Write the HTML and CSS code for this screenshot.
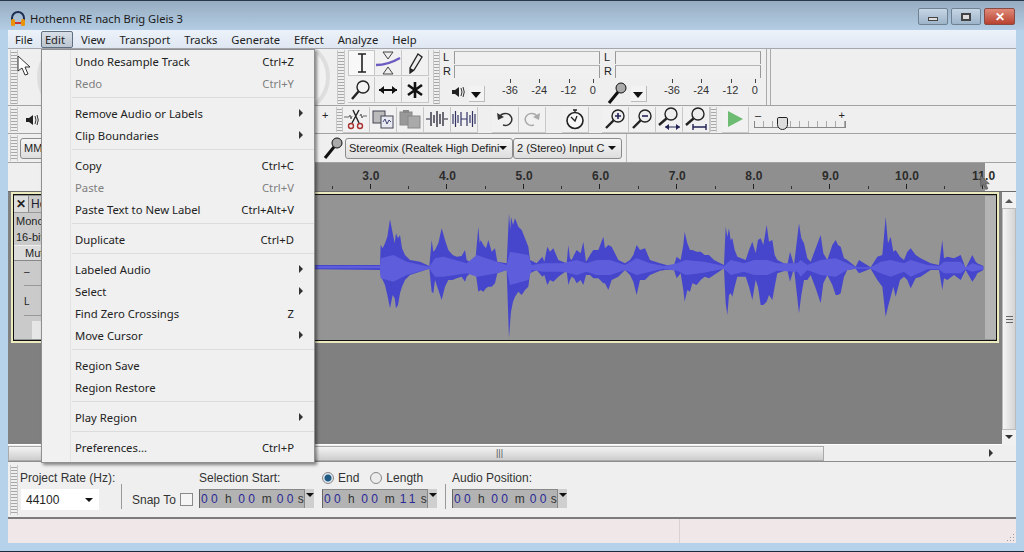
FILE: index.html
```html
<!DOCTYPE html>
<html lang="en">
<head>
  <meta charset="UTF-8">
  <title>Hothenn RE nach Brig Gleis 3</title>
  <link rel="stylesheet" href="styles.css">
</head>
<body>
<div class="window">
  <div class="titlebar">
    <svg class="app-icon" width="16" height="16" viewBox="0 0 16 16"><path d="M2 10V7a6 6 0 0 1 12 0v3" fill="none" stroke="#1d2c50" stroke-width="2"/><rect x="1" y="8" width="4" height="7" rx="1.5" fill="#e8930c"/><rect x="11" y="8" width="4" height="7" rx="1.5" fill="#e8930c"/><rect x="5" y="11" width="6" height="2" fill="#c33"/></svg>
    <span class="title-text">Hothenn RE nach Brig Gleis 3</span>
    <div class="win-buttons">
      <div class="win-btn"><span class="min-mark"></span></div>
      <div class="win-btn"><span class="max-mark"></span></div>
      <div class="win-btn close-btn">✕</div>
    </div>
  </div>

  <div class="menubar">
    <span class="menu-label">File</span>
    <span class="menu-label active">Edit</span>
    <span class="menu-label">View</span>
    <span class="menu-label">Transport</span>
    <span class="menu-label">Tracks</span>
    <span class="menu-label">Generate</span>
    <span class="menu-label">Effect</span>
    <span class="menu-label">Analyze</span>
    <span class="menu-label">Help</span>
  </div>

  <div class="toolrow row-one">
    <div class="grip"></div>
    <div class="mixer"><div class="dial"></div><div class="dial"></div></div>
    <div class="grip"></div>
    <div class="tool-grid">
      <div class="tool-btn pressed"><svg width="20" height="22" viewBox="0 0 20 22"><path d="M6 2h8M10 2v18M6 20h8" fill="none" stroke="#222" stroke-width="1.6"/></svg></div>
      <div class="tool-btn"><svg width="26" height="24" viewBox="0 0 26 24"><path d="M8 1h10l-5 7zM8 23h10l-5-7z" fill="#eee" stroke="#444"/><path d="M1 14q12 0 24-7" fill="none" stroke="#6a5cc0" stroke-width="2.4"/></svg></div>
      <div class="tool-btn"><svg width="20" height="22" viewBox="0 0 20 22"><path d="M13 2l4 3-8 13-4 3 0-5z" fill="#eee" stroke="#222" stroke-width="1.3"/><path d="M5 16l4 2-4 3z" fill="#222"/></svg></div>
      <div class="tool-btn"><svg width="22" height="22" viewBox="0 0 22 22"><circle cx="13" cy="8" r="6" fill="#f4f4f4" stroke="#222" stroke-width="1.4"/><path d="M8.500 12.500L2 20" stroke="#222" stroke-width="2.4"/></svg></div>
      <div class="tool-btn"><svg width="20" height="12" viewBox="0 0 20 12"><path d="M1 6h18" stroke="#111" stroke-width="2"/><path d="M1 6l5-4v8zM19 6l-5-4v8z" fill="#111"/></svg></div>
      <div class="tool-btn"><svg width="18" height="18" viewBox="0 0 18 18"><path d="M9 1v16M2 4l14 10M16 4L2 14" stroke="#111" stroke-width="2.6"/></svg></div>
    </div>
    <div class="grip grip-thin"></div>
    <div class="meters">
      <div class="meter-bars">
        <div class="meter-pair">
          <div class="meter-line"><span class="meter-letter">L</span><span class="meter-bar"></span></div>
          <div class="meter-line"><span class="meter-letter">R</span><span class="meter-bar"></span></div>
        </div>
        <div class="meter-pair">
          <div class="meter-line"><span class="meter-letter">L</span><span class="meter-bar"></span></div>
          <div class="meter-line"><span class="meter-letter">R</span><span class="meter-bar"></span></div>
        </div>
      </div>
      <div class="meter-scales">
        <svg class="meter-icon" width="14" height="14" viewBox="0 0 14 14"><path d="M1 5h3l4-3v10L4 9H1z" fill="#222"/><path d="M10 3q2 4 0 8M12 2q2.500 5 0 10" fill="none" stroke="#333"/></svg>
        <span class="meter-drop"></span>
        <div class="scale-nums"><span>-36</span><span>-24</span><span>-12</span><span>0</span></div>
        <svg class="mic-icon" width="20" height="22" viewBox="0 0 20 22"><circle cx="14" cy="6" r="5" fill="#aaa" stroke="#111"/><path d="M11 10L2 21" stroke="#111" stroke-width="3"/></svg>
        <span class="meter-drop"></span>
        <div class="scale-nums"><span>-36</span><span>-24</span><span>-12</span><span>0</span></div>
      </div>
    </div>
    <div class="double-rule"></div>
  </div>

  <div class="toolrow row-two">
    <div class="grip"></div>
    <svg class="row-speaker" width="14" height="14" viewBox="0 0 14 14"><path d="M1 5h3l4-3v10L4 9H1z" fill="#222"/><path d="M10 3q2 4 0 8M12 2q2.500 5 0 10" fill="none" stroke="#333"/></svg>
    <span class="plus-mark">+</span>
    <div class="grip grip-thin"></div>
    <div class="btn-group">
      <div class="tool-btn"><svg width="24" height="22" viewBox="0 0 24 22"><path d="M0 9h5l1-2 1 4 1-3M16 8l1-2 1 4 1-2h4" fill="none" stroke="#666"/><path d="M15 2L8 15M9 2l6 13" stroke="#222" stroke-width="1.4"/><circle cx="7" cy="18" r="2.500" fill="none" stroke="#a33" stroke-width="1.4"/><circle cx="16" cy="18" r="2.500" fill="none" stroke="#a33" stroke-width="1.4"/></svg></div>
      <div class="tool-btn"><svg width="22" height="20" viewBox="0 0 22 20"><rect x="1" y="2" width="12" height="12" fill="#bbb" stroke="#445"/><rect x="9" y="7" width="12" height="12" fill="#e8eaf2" stroke="#445"/><path d="M11 13l2-3 2 5 2-4 2 2" fill="none" stroke="#447"/></svg></div>
      <div class="tool-btn"><svg width="22" height="20" viewBox="0 0 22 20"><rect x="1" y="3" width="12" height="13" fill="#999" stroke="#888"/><rect x="4" y="1" width="6" height="3" fill="#888"/><rect x="9" y="7" width="12" height="12" fill="#aaa" stroke="#888"/></svg></div>
      <div class="tool-btn"><svg width="22" height="20" viewBox="0 0 22 20"><path d="M0 10h4M18 10h4" stroke="#223"/><path d="M5 3v14M8 6v8M11 2v16M14 5v10M17 3v14" stroke="#223" stroke-width="1.3"/></svg></div>
      <div class="tool-btn"><svg width="24" height="20" viewBox="0 0 24 20"><path d="M1 5v10M3.500 2v16M6 6v8M9 3v14M9 10h6M15 3v14M18 6v8M20.500 2v16M23 5v10" stroke="#336" stroke-width="1.2"/></svg></div>
    </div>
    <div class="btn-group history-group">
      <div class="tool-btn"><svg width="18" height="16" viewBox="0 0 18 16"><path d="M3 7a6.500 6 0 1 1 4 7" fill="none" stroke="#333" stroke-width="1.5"/><path d="M1 2l1 7 6-3z" fill="#333"/></svg></div>
      <div class="tool-btn"><svg width="18" height="16" viewBox="0 0 18 16"><path d="M15 7a6.500 6 0 1 0-4 7" fill="none" stroke="#aaa" stroke-width="1.5"/><path d="M17 2l-1 7-6-3z" fill="#aaa"/></svg></div>
    </div>
    <div class="btn-group timer-group">
      <div class="tool-btn"><svg width="20" height="22" viewBox="0 0 20 22"><circle cx="10" cy="12.500" r="8" fill="#f8f8f8" stroke="#222" stroke-width="1.6"/><path d="M8 2h4M10 2v3M6 9l4 4 2-5" fill="none" stroke="#222" stroke-width="1.3"/></svg></div>
    </div>
    <div class="btn-group zoom-group">
      <div class="tool-btn"><svg width="22" height="22" viewBox="0 0 22 22"><circle cx="14" cy="8" r="6" fill="#eee" stroke="#222" stroke-width="1.4"/><path d="M9.500 12.500L2 20" stroke="#222" stroke-width="2.4"/><path d="M11 8h6M14 5v6" stroke="#225" stroke-width="1.6"/></svg></div>
      <div class="tool-btn"><svg width="22" height="22" viewBox="0 0 22 22"><circle cx="14" cy="8" r="6" fill="#eee" stroke="#222" stroke-width="1.4"/><path d="M9.500 12.500L2 20" stroke="#222" stroke-width="2.4"/><path d="M11 8h6" stroke="#225" stroke-width="1.6"/></svg></div>
      <div class="tool-btn"><svg width="24" height="24" viewBox="0 0 24 24"><circle cx="14" cy="7" r="6" fill="#eee" stroke="#222" stroke-width="1.4"/><path d="M9.500 11.500L2 18" stroke="#222" stroke-width="2.4"/><path d="M8 20h15" stroke="#225"/><path d="M8 20l4-3v6zM23 20l-4-3v6z" fill="#225"/></svg></div>
      <div class="tool-btn"><svg width="24" height="24" viewBox="0 0 24 24"><circle cx="14" cy="7" r="6" fill="#eee" stroke="#222" stroke-width="1.4"/><path d="M9.500 11.500L2 18" stroke="#222" stroke-width="2.4"/><path d="M9 20h13M9 17v6M22 17v6" stroke="#225" stroke-width="1.4"/></svg></div>
    </div>
    <div class="grip grip-thin"></div>
    <div class="tool-btn play-btn"><svg width="18" height="18" viewBox="0 0 18 18"><path d="M2 1l15 8-15 8z" fill="#6cbc72"/></svg></div>
    <div class="speed-slider">
      <div class="slider-ends"><span>–</span><span>+</span></div>
      <div class="slider-track"><span class="slider-thumb"></span></div>
    </div>
  </div>

  <div class="toolrow row-three">
    <div class="grip"></div>
    <div class="combo host-combo">MME</div>
    <svg class="device-mic" width="20" height="22" viewBox="0 0 20 22"><circle cx="14" cy="6" r="5" fill="#aaa" stroke="#111"/><path d="M11 10L2 21" stroke="#111" stroke-width="3"/></svg>
    <div class="combo input-combo"><span>Stereomix (Realtek High Defini</span><i class="combo-arrow"></i></div>
    <div class="combo channel-combo"><span>2 (Stereo) Input C</span><i class="combo-arrow"></i></div>
    <div class="row-end-rule"></div>
  </div>

  <div class="ruler">
    <div class="ruler-cell">3.0</div>
    <div class="ruler-cell">4.0</div>
    <div class="ruler-cell">5.0</div>
    <div class="ruler-cell">6.0</div>
    <div class="ruler-cell">7.0</div>
    <div class="ruler-cell">8.0</div>
    <div class="ruler-cell">9.0</div>
    <div class="ruler-cell">10.0</div>
    <div class="ruler-cell">11.0</div>
  </div>

  <div class="track-zone">
    <div class="tracks">
      <div class="track">
        <div class="track-panel">
          <div class="panel-head"><span class="close-box">✕</span><span class="track-name">Hothenn</span></div>
          <div class="panel-info">Mono</div>
          <div class="panel-info">16-bit</div>
          <div class="mute-btn">Mute</div>
          <div class="panel-slider">–</div>
          <div class="panel-slider">L</div>
          <div class="panel-foot"></div>
        </div>
        <div class="wave-area">
          <svg class="wave" width="670" height="143" viewBox="315 196 670 143">
            <g transform="translate(310,180) scale(.33333)">
              <polygon fill="#4646cc" points="15,255 210,255 212,195 218,205 225,190 232,170 240,118 248,160 254,190 258,160 264,175 270,165 276,205 285,225 300,240 330,245 358,258 365,180 370,215 375,210 385,190 395,145 405,180 415,210 428,225 440,230 455,228 465,210 470,240 495,255 505,140 509,190 512,180 520,195 528,205 535,180 545,215 555,205 562,245 590,250 597,100 601,150 603,110 609,135 615,115 625,140 635,150 645,175 655,200 660,240 680,250 697,230 703,245 712,200 720,215 730,205 745,240 770,250 775,195 780,235 785,240 792,225 800,210 812,220 820,185 828,245 840,225 850,210 865,210 880,170 885,205 895,195 905,200 925,240 945,250 960,240 970,225 980,195 990,210 1005,205 1020,240 1050,250 1080,258 1080,268 1050,272 1020,285 1005,300 990,300 980,345 970,305 960,285 945,270 925,290 905,300 895,330 885,310 880,310 865,295 850,295 840,285 828,285 820,315 812,300 800,310 792,295 785,290 780,300 775,315 770,272 745,290 730,305 720,300 712,315 703,285 697,290 680,270 660,280 655,320 645,330 635,345 625,335 615,350 609,365 603,395 601,420 597,475 590,270 562,280 555,310 545,320 535,320 528,325 520,335 512,330 505,335 495,265 470,290 465,305 455,290 440,295 428,300 415,300 405,320 395,360 385,330 375,300 370,340 365,335 358,266 330,275 300,285 285,300 276,320 270,340 264,375 258,385 254,355 248,345 240,385 232,345 225,315 218,300 212,285 210,270 15,268"/>
              <polygon fill="#5e5edc" points="15,258 210,258 212,235 250,225 290,245 358,260 375,235 400,230 470,250 500,225 560,245 590,255 600,215 655,225 665,255 700,250 760,250 800,240 830,250 860,240 900,240 945,255 980,235 1020,250 1080,262 1020,275 980,285 945,270 900,285 860,285 830,275 800,285 760,275 700,275 665,270 655,300 600,315 590,270 560,280 500,290 470,280 400,290 375,290 358,266 290,285 250,305 212,295 210,265 15,265"/>
            </g>
            <g transform="translate(664,180) scale(.33333)">
              <polygon fill="#4646cc" points="0,255 30,255 38,230 50,240 58,195 62,155 70,190 78,210 85,210 98,215 110,215 122,225 135,225 150,240 180,255 185,140 190,170 195,145 200,180 205,175 212,210 220,230 245,240 255,210 265,185 275,220 282,180 290,175 298,195 308,135 315,185 325,180 332,225 340,240 370,255 378,215 390,255 405,130 412,175 420,190 430,235 440,245 455,205 470,165 478,220 490,240 505,195 515,180 522,195 530,200 540,235 550,240 575,260 585,240 620,262 640,230 655,225 665,110 672,190 680,170 688,215 695,210 708,230 720,240 730,215 740,205 755,225 770,235 800,250 825,255 835,180 840,235 850,230 870,235 890,225 905,265 925,225 935,245 940,250 958,258 958,270 940,280 935,290 925,305 905,270 890,300 870,285 850,300 840,295 835,330 825,270 800,270 770,290 755,295 740,325 730,300 720,290 708,300 695,350 688,320 680,350 672,380 665,410 655,320 640,300 620,266 585,280 575,266 550,270 540,290 530,340 522,345 515,345 505,315 490,285 478,310 470,370 455,325 440,285 430,300 420,300 412,345 405,400 390,265 378,305 370,270 340,280 332,320 325,360 315,345 308,365 298,375 290,375 282,320 275,300 265,360 255,320 245,290 220,290 212,320 205,350 200,340 195,345 190,405 185,370 180,265 150,285 135,295 122,290 110,300 98,315 85,310 78,335 70,330 62,365 58,330 50,280 38,295 30,270 0,270"/>
              <polygon fill="#5e5edc" points="0,258 40,250 65,240 120,245 180,258 200,240 240,250 270,240 310,240 340,250 400,250 410,240 430,255 470,240 515,235 550,250 575,262 620,262 650,245 680,240 720,250 740,240 790,255 825,258 840,245 890,245 905,262 925,250 958,260 958,268 925,275 905,268 890,280 840,280 825,268 790,268 740,290 720,275 680,290 650,280 620,266 575,266 550,270 515,290 470,285 430,270 410,290 400,275 340,272 310,285 270,285 240,275 200,285 180,266 120,278 65,285 40,272 0,268"/>
            </g>
          </svg>
        </div>
        <div class="wave-end"></div>
      </div>
    </div>
    <div class="vscroll">
      <span class="arrow-up"></span>
      <div class="vthumb"><span class="thumb-lines"></span></div>
      <span class="arrow-down"></span>
    </div>
  </div>

  <div class="hscroll">
    <div class="hthumb"><span class="hthumb-lines">|||</span></div>
    <span class="arrow-right"></span>
  </div>

  <div class="bottom-bar">
    <div class="grip"></div>
    <div class="field rate-field">
      <label>Project Rate (Hz):</label>
      <div class="rate-box"><span>44100</span><i class="combo-arrow"></i></div>
    </div>
    <div class="bar-rule"></div>
    <div class="snap"><span>Snap To</span><span class="checkbox"></span></div>
    <div class="field">
      <label>Selection Start:</label>
      <div class="time-box"><b>00</b>h<b>00</b>m<b>00</b><span>s</span><i class="time-drop"></i></div>
    </div>
    <div class="field end-field">
      <div class="radio-row"><span class="radio checked"></span><label>End</label><span class="radio"></span><label>Length</label></div>
      <div class="time-box"><b>00</b>h<b>00</b>m<b>11</b><span>s</span><i class="time-drop"></i></div>
    </div>
    <div class="bar-rule audio-rule"></div>
    <div class="field">
      <label>Audio Position:</label>
      <div class="time-box"><b>00</b>h<b>00</b>m<b>00</b><span>s</span><i class="time-drop"></i></div>
    </div>
  </div>

  <div class="statusbar">
    <div class="status-left"></div>
    <div class="status-right"></div>
    <svg class="resize-dots" width="9" height="9" viewBox="0 0 9 9"><path d="M7 1h1v1H7zM4 4h1v1H4zM7 4h1v1H7zM1 7h1v1H1zM4 7h1v1H4zM7 7h1v1H7z" fill="#9a9a9a"/></svg>
  </div>

  <div class="edit-menu">
    <div class="item"><span>Undo Resample Track</span><span class="keys">Ctrl+Z</span></div>
    <div class="item off"><span>Redo</span><span class="keys">Ctrl+Y</span></div>
    <div class="sep"></div>
    <div class="item sub"><span>Remove Audio or Labels</span></div>
    <div class="item sub"><span>Clip Boundaries</span></div>
    <div class="sep"></div>
    <div class="item"><span>Copy</span><span class="keys">Ctrl+C</span></div>
    <div class="item off"><span>Paste</span><span class="keys">Ctrl+V</span></div>
    <div class="item"><span>Paste Text to New Label</span><span class="keys">Ctrl+Alt+V</span></div>
    <div class="sep"></div>
    <div class="item"><span>Duplicate</span><span class="keys">Ctrl+D</span></div>
    <div class="sep"></div>
    <div class="item sub"><span>Labeled Audio</span></div>
    <div class="item sub"><span>Select</span></div>
    <div class="item"><span>Find Zero Crossings</span><span class="keys">Z</span></div>
    <div class="item sub"><span>Move Cursor</span></div>
    <div class="sep"></div>
    <div class="item"><span>Region Save</span></div>
    <div class="item"><span>Region Restore</span></div>
    <div class="sep"></div>
    <div class="item sub"><span>Play Region</span></div>
    <div class="sep"></div>
    <div class="item"><span>Preferences...</span><span class="keys">Ctrl+P</span></div>
  </div>

  <svg class="pointer" width="14" height="22" viewBox="0 0 14 22"><path d="M1 1v15l4-3 3 7 3-1-3-7h5z" fill="#fff" stroke="#333"/></svg>
  <svg class="pointer ruler-pointer" width="10" height="16" viewBox="0 0 14 22"><path d="M1 1v15l4-3 3 7 3-1-3-7h5z" fill="#777" stroke="#555"/></svg>
</div>
</body>
</html>
```

FILE: styles.css
```css
* {
  box-sizing: border-box;
}
html, body {
  margin: 0;
  height: 100%;
  overflow: hidden;
}
body {
  font-family: "Liberation Sans", Arial, sans-serif;
  font-size: 12px;
  color: #222;
}
.window {
  position: relative;
  width: 1024px;
  height: 552px;
  padding: 0 8px 8px;
  background: #b5d2ea;
  border-top: 1px solid #26384a;
  border-bottom: 1px solid #1d2c3c;
  display: flex;
  flex-direction: column;
  overflow: hidden;
}

/* title bar */
.titlebar {
  height: 29px;
  margin: 0 -8px;
  padding: 0 9px 0 10px;
  background: linear-gradient(#96acc0, #b4cde4);
  display: flex;
  align-items: center;
}
.app-icon {
  margin-top: 6px;
}
.title-text {
  margin: 6px 0 0 4px;
  font-family: "Noto Sans", sans-serif;
  font-size: 11.2px;
  color: #1a1a1a;
}
.win-buttons {
  margin: 2px 0 0 auto;
  display: flex;
  gap: 3px;
}
.win-btn {
  width: 30px;
  height: 17px;
  border: 1px solid #6f8294;
  border-radius: 2px;
  background: linear-gradient(#c6d6e5, #9db4c9);
  display: flex;
  align-items: center;
  justify-content: center;
}
.close-btn {
  width: 31px;
  background: linear-gradient(#e08a78, #b8412f);
  border-color: #8a4a44;
  color: #fff;
  font-size: 12px;
  font-weight: bold;
}
.min-mark {
  width: 10px;
  height: 4px;
  margin-top: 4px;
  border: 1px solid #444;
  background: #ddd;
}
.max-mark {
  width: 10px;
  height: 8px;
  border: 2px solid #444;
  background: #ddd;
}

/* menu bar */
.menubar {
  height: 19px;
  padding: 1px 0 0 7px;
  background: linear-gradient(#ecf2f9, #dfe7f2);
  border-bottom: 1px solid #a4a8ad;
  display: flex;
  font-family: "Noto Sans", sans-serif;
  font-size: 11.2px;
  gap: 14px;
}
.menu-label {
  height: 17px;
  line-height: 17px;
  color: #222;
}
.menu-label.active {
  margin: 0 -6px;
  padding: 0 3px;
  width: 32px;
  border: 1px solid #5e6f80;
  border-radius: 2px;
  background: linear-gradient(#d8dfe7, #bcc6d0);
  line-height: 15px;
}

/* toolbars */
.toolrow {
  display: flex;
  background: #efefef;
  border-bottom: 1px solid #a2a2a2;
  padding-left: 2px;
}
.row-one {
  height: 57px;
}
.row-two {
  height: 28px;
  align-items: center;
}
.row-three {
  height: 29px;
  align-items: center;
}
.grip {
  width: 8px;
  align-self: stretch;
  margin: 1px 0;
  border-left: 1px solid #c9c9c9;
  border-right: 1px solid #c9c9c9;
  background: repeating-linear-gradient(#efefef 0, #efefef 2px, #a8a8a8 2px, #a8a8a8 3px);
  flex: none;
}
.grip-thin {
  width: 7px;
}
.mixer {
  width: 319px;
  padding: 0 0 0 19px;
  display: flex;
  justify-content: space-between;
  align-items: center;
  overflow: hidden;
}
.dial {
  width: 76px;
  height: 76px;
  flex: none;
  margin-right: 7px;
  border-radius: 50%;
  border: 4px solid #dedede;
  background: #f2f2f2;
}
.tool-grid {
  width: 84px;
  margin: 1px 1px 0 3px;
  display: grid;
  grid-template-columns: repeat(3, 27px);
  grid-auto-rows: 27px;
  gap: 0;
}
.tool-btn {
  width: 27px;
  height: 26px;
  flex: none;
  border-right: 1px solid #c8c8c8;
  border-bottom: 1px solid #c8c8c8;
  background: #f1f1f1;
  display: flex;
  align-items: center;
  justify-content: center;
}
.tool-btn.pressed {
  border: 1px solid #c6c6c6;
  background: #f8f8f8;
}
.meters {
  width: 320px;
  margin-left: 1px;
  display: flex;
  flex-direction: column;
}
.meter-bars {
  height: 30px;
  padding-top: 1px;
  display: flex;
}
.meter-pair {
  width: 161px;
}
.meter-pair:last-child {
  width: 159px;
}
.meter-line {
  height: 14px;
  display: flex;
  align-items: center;
}
.meter-letter {
  width: 13px;
  padding-left: 2px;
  font-size: 11px;
}
.meter-bar {
  flex: 1;
  height: 13px;
  border-left: 1px solid #999;
  border-right: 1px solid #999;
  border-top: 1px solid #b4b4b4;
  background: #f0f0f0;
}
.meter-pair:first-child .meter-bar {
  margin-right: 2px;
}
.meter-scales {
  flex: 1;
  display: flex;
  align-items: flex-start;
}
.meter-icon {
  margin: 6px 0 0 10px;
  flex: none;
}
.meter-drop {
  position: relative;
  width: 16px;
  height: 16px;
  margin: 7px 0 0 4px;
  flex: none;
  border-right: 1px solid #bbb;
  border-bottom: 1px solid #bbb;
  background: #f3f3f3;
}
.meter-drop::after {
  content: "";
  position: absolute;
  left: 2px;
  top: 6px;
  border-left: 5px solid transparent;
  border-right: 5px solid transparent;
  border-top: 6px solid #111;
}
.scale-nums {
  width: 94px;
  margin-left: 17px;
  padding-top: 5px;
  display: flex;
  justify-content: space-between;
  font-size: 11px;
  color: #333;
}
.scale-nums span {
  position: relative;
}
.scale-nums span::before {
  content: "";
  position: absolute;
  left: 50%;
  top: -5px;
  width: 1px;
  height: 4px;
  background: #444;
}
.mic-icon {
  margin: 3px 0 0 11px;
  flex: none;
}
.double-rule {
  width: 5px;
  margin-left: 5px;
  border-left: 1px solid #aaa;
  border-right: 1px solid #aaa;
}
.row-speaker {
  margin-left: 7px;
  flex: none;
}
.plus-mark {
  margin-left: 283px;
  margin-bottom: 10px;
  width: 14px;
  font-size: 11px;
  flex: none;
}
.btn-group {
  display: flex;
  flex: none;
}
.history-group {
  margin-left: 14px;
}
.timer-group {
  margin-left: 16px;
}
.zoom-group {
  margin-left: 13px;
}
.play-btn {
  margin-left: 5px;
}
.speed-slider {
  width: 92px;
  margin-left: 5px;
  flex: none;
}
.slider-ends {
  display: flex;
  justify-content: space-between;
  font-size: 11px;
  line-height: 9px;
  padding: 0 1px;
}
.slider-track {
  position: relative;
  height: 7px;
  margin-top: 1px;
  border-bottom: 1px solid #888;
  border-left: 1px solid #888;
  border-right: 1px solid #888;
  background: repeating-linear-gradient(to right, #efefef 0, #efefef 8px, #aaa 8px, #aaa 9px);
}
.slider-thumb {
  position: absolute;
  left: 22px;
  top: -4px;
  width: 11px;
  height: 13px;
  border: 1.5px solid #222;
  border-radius: 2px 2px 6px 6px;
  background: #ddd;
}
.combo {
  height: 21px;
  border: 1px solid #8c8c8c;
  border-radius: 3px;
  background: linear-gradient(#f5f5f5, #dedede);
  display: flex;
  align-items: center;
  justify-content: space-between;
  padding: 0 5px 0 3px;
  font-size: 11px;
  flex: none;
  white-space: nowrap;
  overflow: hidden;
}
.host-combo {
  width: 100px;
  margin-left: 2px;
}
.device-mic {
  margin-left: 203px;
  flex: none;
}
.input-combo {
  width: 168px;
  margin-left: 2px;
}
.channel-combo {
  width: 109px;
}
.row-end-rule {
  width: 1px;
  height: 28px;
  margin-left: 4px;
  background: #bbb;
}
.combo-arrow {
  width: 0;
  height: 0;
  flex: none;
  border-left: 4px solid transparent;
  border-right: 4px solid transparent;
  border-top: 4px solid #111;
}

/* timeline ruler */
.ruler {
  height: 29px;
  padding-left: 323.7px;
  display: flex;
  background: linear-gradient(to right, #efefef 33px, #8f8f8f 33px, #8f8f8f 977px, #efefef 977px);
  box-shadow: inset 0 -10px 0 -9px #6c6c6c;
  overflow: hidden;
}
.ruler-cell {
  position: relative;
  width: 76.6px;
  flex: none;
  padding-top: 6px;
  padding-left: 2px;
  text-align: center;
  font-weight: bold;
  color: #2c2c2c;
  letter-spacing: .2px;
}
.ruler-cell::before {
  content: "";
  position: absolute;
  left: 38px;
  top: 21px;
  width: 1px;
  height: 5px;
  background: #222;
}
.ruler-cell::after {
  content: "";
  position: absolute;
  left: 0;
  top: 23px;
  width: 1px;
  height: 3px;
  background: #333;
}

/* track area */
.track-zone {
  height: 253px;
  display: flex;
}
.tracks {
  width: 994px;
  padding-left: 3px;
  background: #808080;
  border-bottom: 1px solid #fff;
}
.track {
  height: 151px;
  width: 988px;
  display: flex;
  border: 2px solid #ecebc0;
  outline: 1px solid #111;
  outline-offset: -3px;
  background: #949494;
  padding: 2px 1px;
}
.track-panel {
  width: 100px;
  flex: none;
  background: #cacaca;
  white-space: nowrap;
}
.panel-head {
  display: flex;
  height: 17px;
  border-bottom: 1px solid #999;
}
.close-box {
  width: 15px;
  text-align: center;
  font-weight: bold;
  line-height: 16px;
  background: #ddd;
  border-right: 1px solid #888;
  flex: none;
}
.track-name {
  padding-left: 2px;
  color: #223;
  line-height: 16px;
}
.panel-info {
  height: 16px;
  padding-left: 2px;
  line-height: 17px;
  font-size: 11px;
}
.mute-btn {
  height: 16px;
  padding-left: 11px;
  border-top: 1px solid #eee;
  border-bottom: 1px solid #888;
  background: #dcdcdc;
  font-size: 11px;
  line-height: 15px;
}
.panel-slider {
  height: 30px;
  padding: 5px 0 0 10px;
  font-size: 10px;
  background: linear-gradient(#999, #999) 10px 24px / 80px 1px no-repeat;
}
.panel-foot {
  width: 60px;
  height: 18px;
  margin: 0 0 0 18px;
  background: #e6e6e6;
}
.wave-area {
  width: 871px;
  flex: none;
  display: flex;
  justify-content: flex-end;
  background: #949494;
}
.wave-end {
  flex: 1;
  background: #b4b4b4;
}
.vscroll {
  width: 14px;
  background: #f1f1f1;
  display: flex;
  flex-direction: column;
  align-items: center;
}
.arrow-up {
  margin-top: 7px;
  border-left: 4px solid transparent;
  border-right: 4px solid transparent;
  border-bottom: 4px solid #555;
}
.vthumb {
  width: 14px;
  height: 222px;
  margin-top: 5px;
  border: 1px solid #bbb;
  background: linear-gradient(to right, #f5f5f5, #d4d4d4);
  display: flex;
  align-items: center;
  justify-content: center;
}
.thumb-lines {
  width: 7px;
  height: 7px;
  border-top: 1px solid #666;
  border-bottom: 1px solid #666;
  background: linear-gradient(#666, #666) 0 2px / 100% 1px no-repeat;
}
.arrow-down {
  margin-top: 5px;
  border-left: 4px solid transparent;
  border-right: 4px solid transparent;
  border-top: 4px solid #333;
}
.hscroll {
  height: 17px;
  display: flex;
  align-items: center;
  background: #efefef;
  border-bottom: 1px solid #8c8c8c;
}
.hthumb {
  width: 816px;
  height: 15px;
  border: 1px solid #aaa;
  background: linear-gradient(#f3f3f3, #cdcdcd);
  text-align: center;
  font-size: 9px;
  line-height: 13px;
  color: #555;
  flex: none;
}
.hthumb-lines {
  margin-left: 167px;
}
.arrow-right {
  margin-left: 165px;
  border-top: 4px solid transparent;
  border-bottom: 4px solid transparent;
  border-left: 4px solid #333;
}

/* selection toolbar */
.bottom-bar {
  height: 57px;
  padding: 2px 0 1px 2px;
  background: #efefef;
  border-bottom: 2px solid #7c7c7c;
  display: flex;
}
.field {
  width: 115px;
  margin-left: 2px;
  padding-top: 6px;
  flex: none;
}
.field label {
  display: block;
  height: 16px;
  line-height: 16px;
  color: #333;
  white-space: nowrap;
}
.rate-field {
  width: 95px;
  margin-left: 2px;
}
.rate-box {
  width: 78px;
  height: 21px;
  margin: 3px 0 0 1px;
  padding: 0 6px 0 5px;
  background: #fff;
  display: flex;
  align-items: center;
  justify-content: space-between;
}
.bar-rule {
  width: 1px;
  height: 25px;
  margin: 20px 0 0 6px;
  background: #999;
  flex: none;
}
.snap {
  width: 65px;
  margin-left: 10px;
  padding-top: 29px;
  display: flex;
  gap: 4px;
  color: #333;
  flex: none;
}
.checkbox {
  width: 13px;
  height: 13px;
  border: 1px solid #8a8a8a;
  background: #f5f5f5;
}
.time-box {
  position: relative;
  width: 115px;
  height: 19px;
  margin-top: 3px;
  padding-left: 1px;
  border-left: 1px solid #666;
  border-top: 1px solid #888;
  background: #b3b3b3;
  display: flex;
  align-items: center;
  color: #333;
}
.time-box b {
  width: 20px;
  flex: none;
  font-weight: normal;
  letter-spacing: 3.3px;
  color: #2a2a96;
}
.time-box b:nth-of-type(1) {
  margin-right: 4px;
}
.time-box b:nth-of-type(2) {
  margin-left: 6.5px;
  margin-right: 3.5px;
}
.time-box b:nth-of-type(3) {
  margin-left: 5px;
}
.time-box > span {
  margin-left: 1px;
}
.time-drop {
  position: absolute;
  right: 0;
  top: -1px;
  width: 10px;
  height: 19px;
  border-left: 1px solid #888;
  background: #cfcfcf;
}
.time-drop::after {
  content: "";
  position: absolute;
  left: 1px;
  top: 4px;
  border-left: 4px solid transparent;
  border-right: 4px solid transparent;
  border-top: 4px solid #111;
}
.end-field {
  margin-left: 8px;
}
.radio-row {
  height: 16px;
  display: flex;
  align-items: center;
}
.radio-row label {
  margin-left: 4px;
  margin-right: 11px;
}
.radio {
  width: 12px;
  height: 12px;
  flex: none;
  border: 1px solid #888;
  border-radius: 50%;
  background: #ececec;
}
.radio.checked {
  background: radial-gradient(circle, #205a84 0, #205a84 3px, #dfe8ee 4px);
}
.audio-rule {
  margin-left: 8px;
}
.audio-rule + .field {
  margin-left: 6px;
}

/* status bar */
.statusbar {
  position: relative;
  flex: 1;
  display: flex;
  background: #efe7e8;
}
.status-left {
  width: 672px;
  border-right: 1px solid #d8d2d2;
}
.resize-dots {
  position: absolute;
  right: 1px;
  bottom: 1px;
}

/* open edit menu */
.edit-menu {
  position: absolute;
  left: 41px;
  top: 48px;
  width: 274px;
  height: 414px;
  padding: 0 0 0 29px;
  border: 1px solid #8f8f8f;
  background: linear-gradient(to right, #f1f1f1 28px, #e3e3e3 28px, #e3e3e3 29px, #f0f0f0 29px);
  box-shadow: 2px 2px 3px rgba(0, 0, 0, .45);
  font-family: "Noto Sans", sans-serif;
  font-size: 11.3px;
  color: #222;
}
.item {
  position: relative;
  height: 22px;
  padding: 0 20px 0 4px;
  display: flex;
  justify-content: space-between;
  align-items: center;
}
.item.off {
  color: #7f7f7f;
}
.item.sub::after {
  content: "";
  position: absolute;
  right: 11px;
  top: 7px;
  border-top: 4px solid transparent;
  border-bottom: 4px solid transparent;
  border-left: 4px solid #333;
}
.sep {
  height: 8px;
  margin-left: 1px;
  background: linear-gradient(#dcdcdc, #dcdcdc) 0 3px / 100% 1px no-repeat;
}
.pointer {
  position: absolute;
  left: 17px;
  top: 54px;
}
.ruler-pointer {
  left: 980px;
  top: 174px;
}
```
